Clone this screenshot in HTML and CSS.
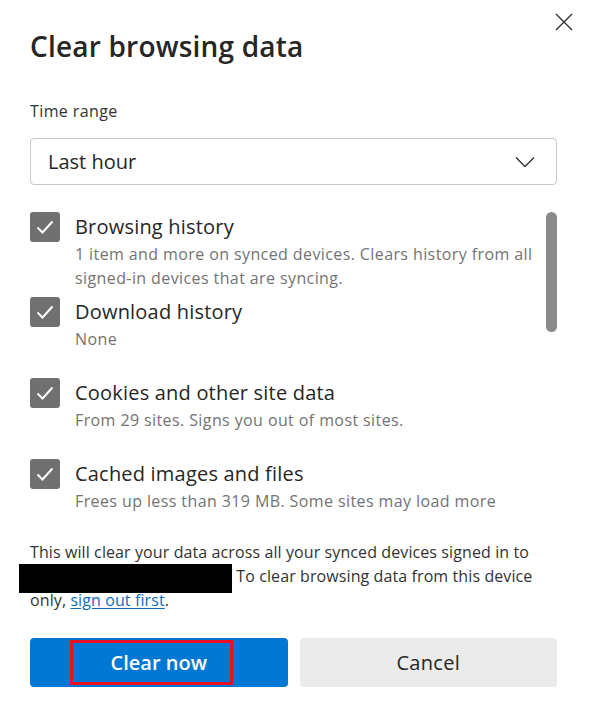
FILE: index.html
```html
<!DOCTYPE html>
<html lang="en">
<head>
<meta charset="utf-8">
<title>Clear browsing data</title>
<link rel="stylesheet" href="styles.css">
</head>
<body>
<div class="dialog">
  <button class="close" aria-label="Close">
    <svg width="18" height="18" viewBox="0 0 18 18"><path d="M1 1L17 17M17 1L1 17" stroke="#333" stroke-width="1.4" fill="none"/></svg>
  </button>
  <h1 class="title">Clear browsing data</h1>
  <div class="field-label">Time range</div>
  <div class="select">
    <span class="select-value">Last hour</span>
    <svg class="chevron" width="20" height="12" viewBox="0 0 20 12"><path d="M1 1.5L10 10.5L19 1.5" stroke="#333" stroke-width="1.4" fill="none"/></svg>
  </div>
  <div class="list-wrap">
    <div class="list">
      <div class="item">
        <span class="check"><svg width="18" height="14" viewBox="0 0 18 14"><path d="M1.5 7.5L6.5 12.5L16.5 1.5" stroke="#fff" stroke-width="2" fill="none"/></svg></span>
        <div class="item-text">
          <div class="item-title">Browsing history</div>
          <div class="item-desc">1 item and more on synced devices. Clears history from all signed-in devices that are syncing.</div>
        </div>
      </div>
      <div class="item">
        <span class="check"><svg width="18" height="14" viewBox="0 0 18 14"><path d="M1.5 7.5L6.5 12.5L16.5 1.5" stroke="#fff" stroke-width="2" fill="none"/></svg></span>
        <div class="item-text">
          <div class="item-title">Download history</div>
          <div class="item-desc">None</div>
        </div>
      </div>
      <div class="item">
        <span class="check"><svg width="18" height="14" viewBox="0 0 18 14"><path d="M1.5 7.5L6.5 12.5L16.5 1.5" stroke="#fff" stroke-width="2" fill="none"/></svg></span>
        <div class="item-text">
          <div class="item-title">Cookies and other site data</div>
          <div class="item-desc">From 29 sites. Signs you out of most sites.</div>
        </div>
      </div>
      <div class="item">
        <span class="check"><svg width="18" height="14" viewBox="0 0 18 14"><path d="M1.5 7.5L6.5 12.5L16.5 1.5" stroke="#fff" stroke-width="2" fill="none"/></svg></span>
        <div class="item-text">
          <div class="item-title">Cached images and files</div>
          <div class="item-desc">Frees up less than 319 MB. Some sites may load more</div>
        </div>
      </div>
    </div>
    <div class="scroll-track"><div class="scroll-thumb"></div></div>
  </div>
  <p class="note">This will clear your data across all your synced devices signed in to <span class="redact"></span> To clear browsing data from this device only, <a class="link" href="#">sign out first</a>.</p>
  <div class="actions">
    <button class="btn btn-primary">Clear now<span class="focus-box"></span></button>
    <button class="btn btn-secondary">Cancel</button>
  </div>
</div>
</body>
</html>
```

FILE: styles.css
```css
* { box-sizing: border-box; }
html, body { margin: 0; padding: 0; background: #fff; }
body {
  font-family: "Open Sans", "Noto Sans", "Liberation Sans", sans-serif;
  color: #333;
  width: 590px;
  height: 716px;
  overflow: hidden;
}
.dialog {
  position: relative;
  padding: 26px 33px 0 30px;
}
.close {
  position: absolute;
  top: 13px;
  right: 17px;
  width: 18px;
  height: 18px;
  padding: 0;
  border: 0;
  background: none;
  line-height: 0;
}
.title {
  margin: 0;
  font-size: 28px;
  font-weight: 600;
  line-height: 40px;
  color: #262626;
  letter-spacing: 0.2px;
}
.field-label {
  margin-top: 33px;
  font-size: 16px;
  line-height: 24px;
  color: #333;
  letter-spacing: 0.4px;
}
.select {
  margin-top: 15px;
  height: 47px;
  border: 1px solid #c8c8c8;
  border-radius: 4px;
  display: flex;
  align-items: center;
  justify-content: space-between;
  padding: 0 21px 0 17px;
}
.select-value {
  font-size: 20px;
  color: #262626;
}
.list-wrap {
  margin-top: 27px;
  display: flex;
  align-items: flex-start;
}
.list {
  flex: 1;
}
.item {
  display: flex;
  align-items: flex-start;
  min-height: 74px;
  padding-bottom: 7px;
  box-sizing: content-box;
}
.check {
  flex: none;
  width: 30px;
  height: 30px;
  border-radius: 3px;
  background: #707070;
  display: flex;
  align-items: center;
  justify-content: center;
  margin-right: 15px;
}
.item-text { flex: 1; }
.item-title {
  font-size: 20px;
  line-height: 30px;
  color: #262626;
  letter-spacing: 0.2px;
}
.item-desc {
  font-size: 16px;
  line-height: 24px;
  color: #737373;
  letter-spacing: 0.4px;
  padding-right: 4px;
}
.scroll-track {
  flex: none;
  width: 11px;
}
.scroll-thumb {
  width: 11px;
  height: 120px;
  border-radius: 6px;
  background: #8a8a8a;
}
.note {
  margin: 0;
  font-size: 16px;
  line-height: 24px;
  color: #333;
  letter-spacing: 0.1px;
}
.redact {
  display: inline-block;
  width: 213px;
  height: 29px;
  background: #000;
  margin-left: -11px;
  margin-bottom: -5px;
  vertical-align: top;
}
.link {
  color: #0f6cbd;
  text-decoration: underline;
  text-underline-offset: 2px;
}
.actions {
  margin-top: 26px;
  display: flex;
  gap: 12px;
}
.btn {
  position: relative;
  flex: 1;
  height: 49px;
  border: 0;
  border-radius: 4px;
  font-family: inherit;
  font-size: 20px;
  display: flex;
  align-items: center;
  justify-content: center;
  padding: 0;
}
.btn-primary {
  background: #0078d4;
  color: #fff;
  font-weight: 600;
}
.btn-secondary {
  background: #ebebeb;
  color: #262626;
  letter-spacing: 0.3px;
}
.focus-box {
  position: absolute;
  left: 40px;
  top: 2px;
  width: 163px;
  height: 45px;
  border: 3px solid #e81123;
}
```
